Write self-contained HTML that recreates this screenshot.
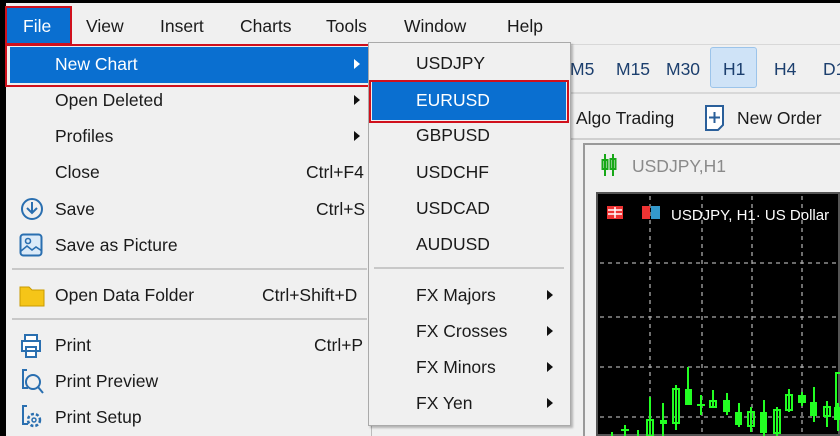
<!DOCTYPE html>
<html><head><style>
*{margin:0;padding:0;box-sizing:border-box}
body{width:840px;height:436px;overflow:hidden;background:#000;font-family:"Liberation Sans",sans-serif;font-size:17.5px;color:#1a1a1a;position:relative}
.a{position:absolute;white-space:nowrap}
.mi{position:absolute;left:55px;line-height:20px}
.sm{position:absolute;left:416px;line-height:20px}
.arr{position:absolute;width:0;height:0;border-top:5px solid transparent;border-bottom:5px solid transparent;border-left:6px solid #111}
</style></head><body>
<div class="a" style="left:6px;top:3px;width:834px;height:433px;background:#f0f0f0"></div>
<div class="a" style="left:6px;top:44px;width:834px;height:1px;background:#d8d8d8"></div>
<div class="a" style="left:6px;top:8px;width:64px;height:36px;background:#0a6fd0"></div>
<div class="a" style="left:5px;top:6px;width:67px;height:39px;border:2px solid #d0101c"></div>
<div class="a" style="left:23px;top:16px;color:#fff">File</div>
<div class="a" style="left:86px;top:16px">View</div>
<div class="a" style="left:160px;top:16px">Insert</div>
<div class="a" style="left:240px;top:16px">Charts</div>
<div class="a" style="left:326px;top:16px">Tools</div>
<div class="a" style="left:404px;top:16px">Window</div>
<div class="a" style="left:507px;top:16px">Help</div>
<div class="a" style="left:570px;top:59px;color:#1c3f6e">M5</div>
<div class="a" style="left:616px;top:59px;color:#1c3f6e">M15</div>
<div class="a" style="left:666px;top:59px;color:#1c3f6e">M30</div>
<div class="a" style="left:710px;top:47px;width:47px;height:41px;background:#cfe3f7;border:1px solid #9cc4ea;border-radius:3px"></div>
<div class="a" style="left:723px;top:59px;color:#1c3f6e">H1</div>
<div class="a" style="left:774px;top:59px;color:#1c3f6e">H4</div>
<div class="a" style="left:823px;top:59px;color:#1c3f6e">D1</div>
<div class="a" style="left:560px;top:92px;width:280px;height:2px;background:#d8d8d8"></div>
<div class="a" style="left:576px;top:108px">Algo Trading</div>
<svg class="a" style="left:704px;top:104px" width="22" height="28" viewBox="0 0 22 28"><path d="M2 2h17v19l-5 5H2z" fill="#fff" stroke="#2a5f9a" stroke-width="2"/><path d="M10.5 8v11M5 13.5h11" stroke="#2a5f9a" stroke-width="2"/></svg>
<div class="a" style="left:737px;top:108px">New Order</div>
<div class="a" style="left:560px;top:138px;width:280px;height:2px;background:#cfcfcf"></div>
<div class="a" style="left:583px;top:143px;width:257px;height:293px;background:#f0f0f0;border-left:2px solid #999;border-top:2px solid #999"></div>
<svg class="a" style="left:601px;top:154px" width="16" height="22"><path d="M4 0v22M12 0v22" stroke="#18a818" stroke-width="2"/><rect x="1.5" y="6" width="5" height="9" fill="none" stroke="#18a818" stroke-width="2"/><rect x="9.5" y="5" width="5" height="10" fill="none" stroke="#18a818" stroke-width="2"/></svg>
<div class="a" style="left:632px;top:156px;color:#8a8a8a">USDJPY,H1</div>
<div class="a" style="left:596px;top:192px;width:244px;height:244px;background:#000;border:2px solid #555"></div>
<svg class="a" style="left:600px;top:196px" width="240" height="240">
<g stroke="#aaa" stroke-width="1.3" stroke-dasharray="4,4">
<path d="M50 0v240M102 0v240M152 0v240M202 0v240"/>
<path d="M0 67h240M0 121h240M0 171h240M0 221h240"/>
</g>
<rect x="7" y="10" width="16" height="13" fill="#e33"/><path d="M8 14h14M8 18h14M15 11v11" stroke="#fff" stroke-width="1.5"/>
<rect x="42" y="10" width="8" height="13" fill="#e33"/><rect x="51" y="10" width="9" height="13" fill="#39c"/>
<text x="71" y="24" fill="#fff" font-family="Liberation Sans" font-size="15">USDJPY, H1· US Dollar</text>
<g stroke="#2f2" stroke-width="2" fill="none">
<path d="M12 236v6M25 229v11M21 234h8M38 234v6M50 201v39M63 207v33M76 189v45M88 171v38M101 199v20M97 209h8M113 194v17M127 197v22M139 207v24M151 211v25M164 204v36M177 211v29M189 193v23M202 196v14M214 191v35M227 205v26M238 207v28"/>
<rect x="47" y="224" width="6" height="16"/><rect x="73" y="193" width="6" height="34"/><rect x="110" y="205" width="6" height="6"/><rect x="148" y="216" width="6" height="14"/><rect x="174" y="214" width="6" height="23"/><rect x="186" y="199" width="6" height="15"/><rect x="224" y="211" width="6" height="9"/><rect x="236" y="177" width="6" height="40"/>
</g>
<g fill="#2f2"><rect x="85" y="193" width="7" height="16"/><rect x="60" y="224" width="7" height="4"/><rect x="123" y="204" width="7" height="12"/><rect x="135" y="216" width="7" height="13"/><rect x="160" y="216" width="7" height="21"/><rect x="198" y="199" width="8" height="8"/><rect x="210" y="206" width="7" height="14"/><rect x="234" y="211" width="6" height="13"/></g>
</svg>
<div class="a" style="left:8px;top:44px;width:364px;height:392px;background:#f0f0f0;border-right:1px solid #bbb"></div>
<div class="a" style="left:10px;top:47px;width:358px;height:36px;background:#0a6fd0"></div>
<div class="a" style="left:5px;top:44px;width:367px;height:43px;border:2px solid #d0101c"></div>
<div class="mi" style="top:54px;color:#fff">New Chart</div>
<div class="arr" style="left:354px;top:59px;border-left-color:#fff"></div>
<div class="mi" style="top:90px">Open Deleted</div><div class="arr" style="left:354px;top:95px"></div>
<div class="mi" style="top:126px">Profiles</div><div class="arr" style="left:354px;top:131px"></div>
<div class="mi" style="top:162px">Close</div><div class="a" style="left:306px;top:162px">Ctrl+F4</div>
<svg class="a" style="left:20px;top:197px" width="24" height="24"><circle cx="12" cy="12" r="10" fill="none" stroke="#2a6fb0" stroke-width="2"/><path d="M12 5v11M7 11l5 5 5-5" fill="none" stroke="#2a6fb0" stroke-width="2"/></svg>
<div class="mi" style="top:199px">Save</div><div class="a" style="left:316px;top:199px">Ctrl+S</div>
<svg class="a" style="left:19px;top:233px" width="25" height="25"><rect x="1.5" y="1.5" width="21" height="21" rx="3" fill="#dbeaf8" stroke="#2a6fb0" stroke-width="2"/><circle cx="9" cy="8" r="2.5" fill="none" stroke="#2a6fb0" stroke-width="1.6"/><path d="M2 18l6-5 5 4 4-3 6 4" fill="none" stroke="#2a6fb0" stroke-width="1.6"/></svg>
<div class="mi" style="top:235px">Save as Picture</div>
<div class="a" style="left:12px;top:268px;width:355px;height:2px;background:#c8c8c8"></div>
<svg class="a" style="left:19px;top:285px" width="26" height="22"><path d="M1 2h9l3 3h12v16H1z" fill="#f5c518" stroke="#c99a00"/></svg>
<div class="mi" style="top:285px">Open Data Folder</div><div class="a" style="left:262px;top:285px">Ctrl+Shift+D</div>
<div class="a" style="left:12px;top:318px;width:355px;height:2px;background:#c8c8c8"></div>
<svg class="a" style="left:19px;top:333px" width="26" height="26"><path d="M6 8V2h12v6M3 8h18v10H3zM7 14h10v10H7z" fill="#fff" stroke="#2a6fb0" stroke-width="2"/></svg>
<div class="mi" style="top:335px">Print</div><div class="a" style="left:314px;top:335px">Ctrl+P</div>
<svg class="a" style="left:19px;top:368px" width="26" height="28"><path d="M8 2H4v18h5" fill="none" stroke="#2a6fb0" stroke-width="2"/><circle cx="14" cy="14" r="7" fill="none" stroke="#2a6fb0" stroke-width="2"/><path d="M19 19l5 6" stroke="#2a6fb0" stroke-width="2"/></svg>
<div class="mi" style="top:371px">Print Preview</div>
<svg class="a" style="left:19px;top:404px" width="26" height="28"><path d="M8 2H4v18h5" fill="none" stroke="#2a6fb0" stroke-width="2"/><circle cx="15" cy="16" r="6" fill="none" stroke="#2a6fb0" stroke-width="2.5" stroke-dasharray="3,2"/><circle cx="15" cy="16" r="2" fill="none" stroke="#2a6fb0" stroke-width="1.5"/></svg>
<div class="mi" style="top:407px">Print Setup</div>
<div class="a" style="left:368px;top:42px;width:203px;height:384px;background:#f0f0f0;border:1px solid #aaa;box-shadow:2px 2px 2px rgba(0,0,0,.25)"></div>
<div class="a" style="left:372px;top:82px;width:194px;height:38px;background:#0a6fd0"></div>
<div class="a" style="left:369px;top:80px;width:200px;height:43px;border:2px solid #d0101c"></div>
<div class="sm" style="top:53px">USDJPY</div>
<div class="sm" style="top:90px;color:#fff">EURUSD</div>
<div class="sm" style="top:125px">GBPUSD</div>
<div class="sm" style="top:162px">USDCHF</div>
<div class="sm" style="top:198px">USDCAD</div>
<div class="sm" style="top:234px">AUDUSD</div>
<div class="a" style="left:374px;top:267px;width:190px;height:2px;background:#c8c8c8"></div>
<div class="sm" style="top:285px">FX Majors</div><div class="arr" style="left:547px;top:290px"></div>
<div class="sm" style="top:321px">FX Crosses</div><div class="arr" style="left:547px;top:326px"></div>
<div class="sm" style="top:357px">FX Minors</div><div class="arr" style="left:547px;top:362px"></div>
<div class="sm" style="top:393px">FX Yen</div><div class="arr" style="left:547px;top:398px"></div>
</body></html>
